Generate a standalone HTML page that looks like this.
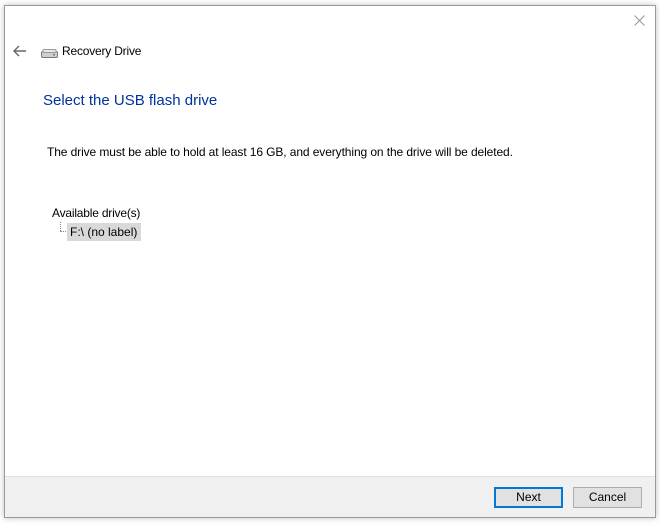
<!DOCTYPE html>
<html><head><style>
body{margin:0;width:660px;height:525px;background:#fff;position:relative;overflow:hidden;font-family:"Segoe UI","Liberation Sans",sans-serif;}
.win{position:absolute;left:4px;top:5px;width:650px;height:511px;border:1px solid #9a9a9a;background:#fff;box-shadow:0 0 6px rgba(0,0,0,0.25);}
.t{position:absolute;white-space:nowrap;}
.foot{position:absolute;left:0;right:0;top:470px;bottom:0;background:#f0f0f0;border-top:1px solid #dfdfdf;}
.btn{position:absolute;top:10px;width:67px;height:19px;background:#e1e1e1;border:1px solid #adadad;font-size:12px;text-align:center;line-height:19px;color:#000;}
</style></head><body>
<div class="win">
  <svg style="position:absolute;left:629px;top:9px" width="11" height="11"><path d="M0.5 0.5L10.5 10.5M10.5 0.5L0.5 10.5" stroke="#999" stroke-width="1"/></svg>
  <svg style="position:absolute;left:8px;top:39px" width="14" height="12"><path d="M1 6H13M6 1L1 6L6 11" stroke="#666" stroke-width="1.4" fill="none"/></svg>
  <svg style="position:absolute;left:36px;top:43px" width="17" height="9"><rect x="0.5" y="2.5" width="16" height="6" rx="1.5" fill="#cfcfcf" stroke="#777"/><rect x="2" y="0.5" width="13" height="3" rx="1" fill="#e8e8e8" stroke="#999"/><rect x="12" y="5" width="2" height="1.5" fill="#3a3"/></svg>
  <div class="t" style="left:57px;top:38px;font-size:12px;color:#000;letter-spacing:-0.2px;">Recovery Drive</div>
  <div class="t" style="left:38px;top:86px;font-size:15px;color:#003399;">Select the USB flash drive</div>
  <div class="t" style="left:42px;top:139px;font-size:12px;color:#000;letter-spacing:-0.1px;">The drive must be able to hold at least 16 GB, and everything on the drive will be deleted.</div>
  <div class="t" style="left:47px;top:200px;font-size:12px;color:#000;letter-spacing:-0.2px;">Available drive(s)</div>
  <div style="position:absolute;left:55px;top:216px;width:0;height:9px;border-left:1px dotted #888;"></div>
  <div style="position:absolute;left:55px;top:225px;width:8px;height:0;border-top:1px dotted #888;"></div>
  <div class="t" style="left:62px;top:217px;height:18px;padding:0 4px 0 3px;background:#d9d9d9;font-size:12px;line-height:18px;color:#000;">F:\ (no label)</div>
  <div class="foot">
    <div class="btn" style="left:489px;border:2px solid #0078d7;width:65px;height:17px;line-height:17px;">Next</div>
    <div class="btn" style="left:568px;">Cancel</div>
  </div>
</div>
</body></html>
